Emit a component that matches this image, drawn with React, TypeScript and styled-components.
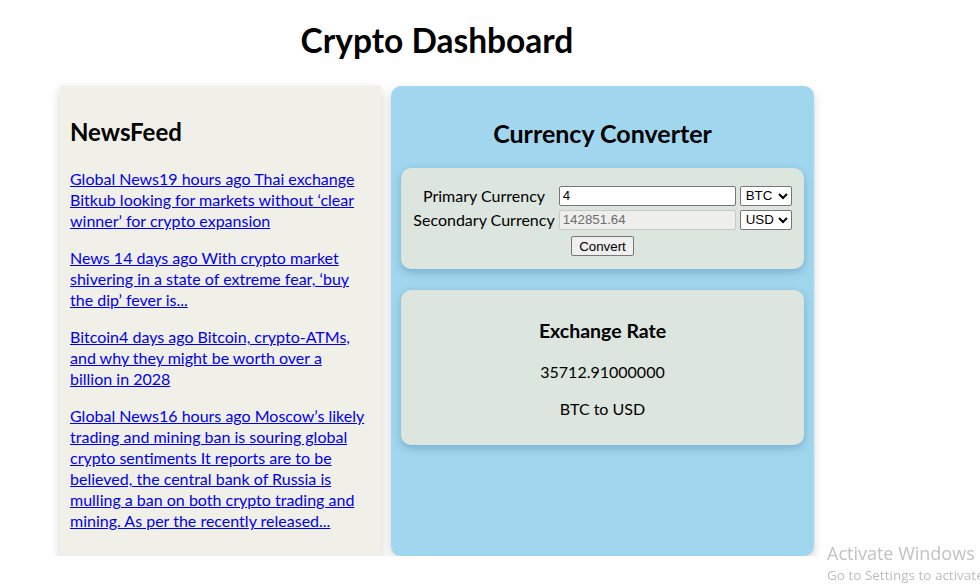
import React, { useState } from "react"
import styled, { createGlobalStyle } from "styled-components"

const GlobalStyle = createGlobalStyle`
  html, body {
    margin: 0;
    padding: 0;
    background: #ffffff;
    font-family: Lato, "Noto Sans", sans-serif;
    color: #000000;
  }
`

interface NewsItem {
  source: string
  time: string
  title: string
}

const news: NewsItem[] = [
  {
    source: "Global News",
    time: "19 hours ago",
    title: "Thai exchange Bitkub looking for markets without ‘clear winner’ for crypto expansion",
  },
  {
    source: "News ",
    time: "14 days ago",
    title: "With crypto market shivering in a state of extreme fear, ‘buy the dip’ fever is...",
  },
  {
    source: "Bitcoin",
    time: "4 days ago",
    title: "Bitcoin, crypto-ATMs, and why they might be worth over a billion in 2028",
  },
  {
    source: "Global News",
    time: "16 hours ago",
    title:
      "Moscow’s likely trading and mining ban is souring global crypto sentiments It reports are to be believed, the central bank of Russia is mulling a ban on both crypto trading and mining. As per the recently released...",
  },
]

const NewsFeed: React.FC = () => (
  <FeedPanel>
    <FeedTitle>NewsFeed</FeedTitle>
    {news.map((item, i) => (
      <FeedItem key={i}>
        <FeedLink href="#">{`${item.source}${item.time} ${item.title}`}</FeedLink>
      </FeedItem>
    ))}
  </FeedPanel>
)

const CurrencyConverter: React.FC = () => {
  const [amount, setAmount] = useState("4")
  const [primary, setPrimary] = useState("BTC")
  const [secondary, setSecondary] = useState("USD")

  return (
    <ConverterPanel>
      <ConverterTitle>Currency Converter</ConverterTitle>
      <InputBox>
        <FormTable>
          <tbody>
            <tr>
              <LabelCell>Primary Currency</LabelCell>
              <td>
                <AmountInput
                  type="number"
                  value={amount}
                  onChange={(e) => setAmount(e.target.value)}
                />
              </td>
              <td>
                <CurrencySelect value={primary} onChange={(e) => setPrimary(e.target.value)}>
                  <option>BTC</option>
                  <option>ETH</option>
                  <option>USD</option>
                </CurrencySelect>
              </td>
            </tr>
            <tr>
              <LabelCell>Secondary Currency</LabelCell>
              <td>
                <AmountInput disabled value="142851.64" readOnly />
              </td>
              <td>
                <CurrencySelect value={secondary} onChange={(e) => setSecondary(e.target.value)}>
                  <option>BTC</option>
                  <option>ETH</option>
                  <option>USD</option>
                </CurrencySelect>
              </td>
            </tr>
          </tbody>
        </FormTable>
        <ConvertButton>Convert</ConvertButton>
      </InputBox>
      <RateBox>
        <RateTitle>Exchange Rate</RateTitle>
        <RateText>35712.91000000</RateText>
        <RateText>{`${primary} to ${secondary}`}</RateText>
      </RateBox>
    </ConverterPanel>
  )
}

export default function App() {
  return (
    <>
      <GlobalStyle />
      <Page>
        <Heading>Crypto Dashboard</Heading>
        <Dashboard>
          <NewsFeed />
          <CurrencyConverter />
        </Dashboard>
      </Page>
      <Watermark>
        <WatermarkTitle>Activate Windows</WatermarkTitle>
        <WatermarkText>Go to Settings to activate Windows.</WatermarkText>
      </Watermark>
    </>
  )
}

const Page = styled.div`
  width: 874px;
  display: flex;
  flex-direction: column;
  align-items: center;
`

const Heading = styled.h1`
  margin: 18px 0 24px;
  font-size: 33.5px;
  line-height: 44px;
  font-weight: 700;
`

const Dashboard = styled.div`
  display: flex;
  align-items: stretch;
  gap: 10px;
`

const FeedPanel = styled.div`
  width: 321px;
  box-sizing: border-box;
  padding: 11px 15px 9px 10px;
  background: #f0efe8;
  box-shadow: 0 4px 10px rgba(0, 0, 0, 0.18);
`

const FeedTitle = styled.h2`
  margin: 19px 0 20px;
  font-size: 24px;
  line-height: 32px;
  font-weight: 700;
`

const FeedItem = styled.p`
  margin: 16px 0;
  font-size: 16px;
  line-height: 21px;
`

const FeedLink = styled.a`
  color: #0000ee;
  text-decoration: underline;
`

const ConverterPanel = styled.div`
  width: 423px;
  box-sizing: border-box;
  padding: 11px 10px;
  background: #a0d6ee;
  border-radius: 10px;
  box-shadow: 0 4px 10px rgba(0, 0, 0, 0.18);
`

const ConverterTitle = styled.h2`
  margin: 20px 0 19px;
  font-size: 25px;
  line-height: 32px;
  font-weight: 700;
  text-align: center;
`

const InputBox = styled.div`
  display: flex;
  flex-direction: column;
  align-items: center;
  padding: 14px 0 13px;
  background: #dde6de;
  border-radius: 10px;
  box-shadow: 0 3px 8px rgba(0, 60, 90, 0.25);
`

const FormTable = styled.table`
  border-spacing: 2px;
  border-collapse: separate;

  td {
    padding: 0 1px;
    height: 22px;
  }
`

const LabelCell = styled.td`
  font-size: 16px;
  text-align: center;
  white-space: nowrap;
`

const AmountInput = styled.input`
  width: 177px;
  height: 20px;
  box-sizing: border-box;
  padding: 1px 3px;
  border: 1px solid #767676;
  border-radius: 2px;
  background: #ffffff;
  font-family: "Liberation Sans", Arial, sans-serif;
  font-size: 13.33px;
  color: #000000;
  -moz-appearance: textfield;

  &::-webkit-outer-spin-button,
  &::-webkit-inner-spin-button {
    -webkit-appearance: none;
    margin: 0;
  }

  &:disabled {
    background: #eeefec;
    border-color: #c6c9c4;
    color: #6d6d6d;
  }
`

const CurrencySelect = styled.select`
  width: 52px;
  height: 20px;
  box-sizing: border-box;
  padding: 0 1px;
  border: 1px solid #767676;
  border-radius: 2px;
  background: #ffffff;
  font-family: "Liberation Sans", Arial, sans-serif;
  font-size: 13.33px;
  color: #000000;
`

const ConvertButton = styled.button`
  margin-top: 4px;
  height: 20px;
  padding: 0 7px;
  border: 1px solid #767676;
  border-radius: 2px;
  background: #efefef;
  font-family: "Liberation Sans", Arial, sans-serif;
  font-size: 13.33px;
  color: #000000;
`

const RateBox = styled.div`
  margin-top: 21px;
  padding: 10px 0;
  background: #dde6de;
  border-radius: 10px;
  box-shadow: 0 3px 8px rgba(0, 60, 90, 0.25);
  text-align: center;
`

const RateTitle = styled.h3`
  margin: 18px 0;
  font-size: 19.5px;
  line-height: 25px;
  font-weight: 700;
`

const RateText = styled.p`
  margin: 16px 0;
  font-size: 16px;
  line-height: 21px;
`

const Watermark = styled.div`
  position: fixed;
  left: 827px;
  top: 541px;
  white-space: nowrap;
  pointer-events: none;
  color: #c2c2c2;
  font-family: "Open Sans", Lato, sans-serif;
`

const WatermarkTitle = styled.div`
  font-size: 18px;
  line-height: 25px;
`

const WatermarkText = styled.div`
  font-size: 13.5px;
  line-height: 18px;
  color: #bdbdbd;
`
